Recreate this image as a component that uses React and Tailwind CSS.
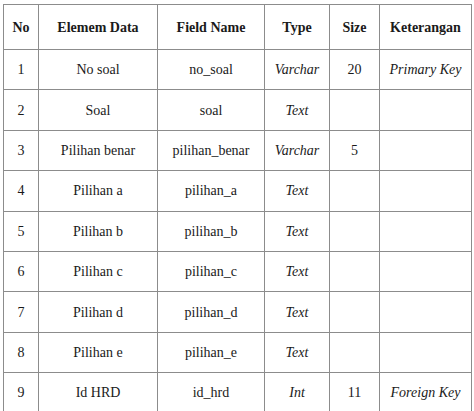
const rows = [
  ['1', 'No soal', 'no_soal', 'Varchar', '20', 'Primary Key'],
  ['2', 'Soal', 'soal', 'Text', '', ''],
  ['3', 'Pilihan benar', 'pilihan_benar', 'Varchar', '5', ''],
  ['4', 'Pilihan a', 'pilihan_a', 'Text', '', ''],
  ['5', 'Pilihan b', 'pilihan_b', 'Text', '', ''],
  ['6', 'Pilihan c', 'pilihan_c', 'Text', '', ''],
  ['7', 'Pilihan d', 'pilihan_d', 'Text', '', ''],
  ['8', 'Pilihan e', 'pilihan_e', 'Text', '', ''],
  ['9', 'Id HRD', 'id_hrd', 'Int', '11', 'Foreign Key'],
];

const headers = ['No', 'Elemem Data', 'Field Name', 'Type', 'Size', 'Keterangan'];
const widths = ['w-[35px]', 'w-[119px]', 'w-[107px]', 'w-[65px]', 'w-[50px]', 'w-[92px]'];

export default function App() {
  return (
    <div className="h-[411px] w-[474px] overflow-hidden bg-white pl-[3px] pt-[4px] [font-family:'Liberation_Serif','Times_New_Roman',serif] text-[14px] text-[#1a1a1a]">
      <table className="table-fixed border-collapse">
        <colgroup>
          {widths.map((w, i) => (
            <col key={i} className={w} />
          ))}
        </colgroup>
        <thead>
          <tr className="h-[45px]">
            {headers.map((h) => (
              <th key={h} className="border border-[#8c8c8c] p-0 text-center align-middle font-bold">
                {h}
              </th>
            ))}
          </tr>
        </thead>
        <tbody>
          {rows.map((r) => (
            <tr key={r[0]} className="h-[40.4px]">
              {r.map((cell, i) => (
                <td
                  key={i}
                  className={`border border-[#8c8c8c] p-0 text-center align-middle ${i === 3 || i === 5 ? 'italic' : ''}`}
                >
                  {cell}
                </td>
              ))}
            </tr>
          ))}
        </tbody>
      </table>
    </div>
  );
}
